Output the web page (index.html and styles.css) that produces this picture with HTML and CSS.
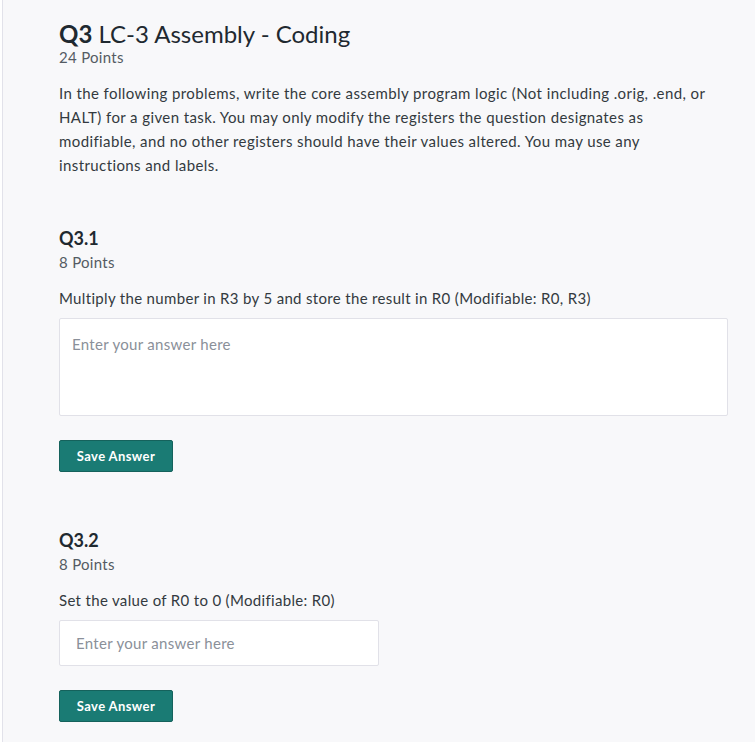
FILE: index.html
```html
<!DOCTYPE html>
<html>
<head>
<meta charset="utf-8">
<link rel="stylesheet" href="styles.css">
</head>
<body>
<main class="page">
  <section class="question">
    <h1 class="q-title"><strong>Q3</strong> LC-3 Assembly - Coding</h1>
    <div class="points">24 Points</div>
    <p class="intro">In the following problems, write the core assembly program logic (Not including .orig, .end, or HALT) for a given task. You may only modify the registers the question designates as modifiable, and no other registers should have their values altered. You may use any instructions and labels.</p>
  </section>

  <section class="subq">
    <h2 class="sub-title">Q3.1</h2>
    <div class="points">8 Points</div>
    <p class="prompt">Multiply the number in R3 by 5 and store the result in R0 (Modifiable: R0, R3)</p>
    <textarea class="answer-area" placeholder="Enter your answer here"></textarea>
    <button class="save">Save Answer</button>
  </section>

  <section class="subq">
    <h2 class="sub-title">Q3.2</h2>
    <div class="points">8 Points</div>
    <p class="prompt">Set the value of R0 to 0 (Modifiable: R0)</p>
    <input class="answer-input" type="text" placeholder="Enter your answer here">
    <button class="save">Save Answer</button>
  </section>
</main>
</body>
</html>
```
FILE: styles.css
```css
html, body {
  margin: 0;
  padding: 0;
  background: #ffffff;
}
body {
  font-family: Lato, "Open Sans", sans-serif;
  color: #2d3338;
}
.page {
  margin-left: 2px;
  border-left: 1px solid #e2e2ea;
  background: #f8f8fa;
  min-height: 742px;
  padding: 20px 0 0 56px;
  box-sizing: border-box;
}
.q-title {
  margin: 0;
  font-size: 24px;
  line-height: 28px;
  font-weight: 400;
  color: #1f2930;
}
.q-title strong {
  font-weight: 700;
}
.points {
  font-size: 15px;
  line-height: 18px;
  letter-spacing: 0.3px;
  color: #545b63;
}
.subq .points {
  margin-top: 3px;
}
.intro {
  margin: 15px 0 0 0;
  width: 656px;
  font-size: 15px;
  line-height: 24px;
  letter-spacing: 0.4px;
  color: #333a40;
}
.subq {
  display: flex;
  flex-direction: column;
  align-items: flex-start;
}
.question + .subq {
  margin-top: 49px;
}
.subq + .subq {
  margin-top: 56px;
}
.sub-title {
  margin: 0;
  font-size: 18px;
  line-height: 24px;
  font-weight: 700;
  color: #1f2930;
}
.prompt {
  margin: 17px 0 0 0;
  font-size: 15px;
  line-height: 20px;
  letter-spacing: 0.33px;
  color: #333a40;
}
.answer-area {
  margin-top: 10px;
  width: 669px;
  height: 98px;
  box-sizing: border-box;
  border: 1px solid #e1e1e8;
  border-radius: 2px;
  background: #fff;
  padding: 15px 12px;
  font-family: inherit;
  font-size: 15px;
  line-height: 20px;
  letter-spacing: 0.3px;
  resize: none;
}
.answer-input {
  margin-top: 10px;
  width: 320px;
  height: 46px;
  box-sizing: border-box;
  border: 1px solid #e1e1e8;
  border-radius: 2px;
  background: #fff;
  padding: 0 16px;
  font-family: inherit;
  font-size: 15px;
  letter-spacing: 0.3px;
}
.answer-area::placeholder,
.answer-input::placeholder {
  color: #8a9099;
}
.save {
  margin-top: 24px;
  width: 114px;
  height: 32px;
  padding: 0;
  background: #1a7b74;
  border: 1px solid #15625c;
  border-radius: 2px;
  color: #fff;
  font-family: inherit;
  font-size: 13px;
  font-weight: 700;
  letter-spacing: 0.4px;
}
```
